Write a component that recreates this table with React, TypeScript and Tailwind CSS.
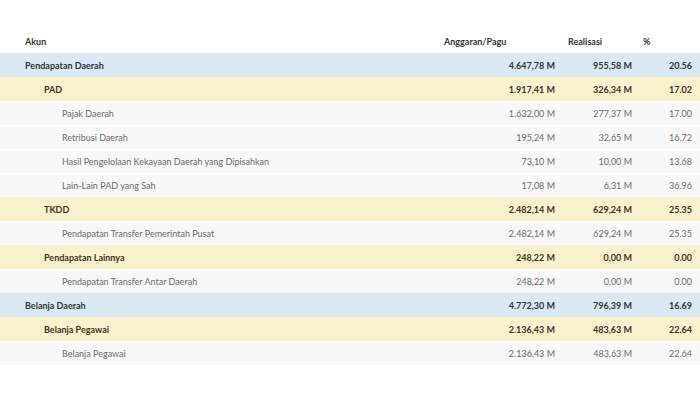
import React from "react";

type Row = { name: string; a: string; r: string; p: string; level: 1 | 2 | 3 };

const rows: Row[] = [
  { name: "Pendapatan Daerah", a: "4.647,78 M", r: "955,58 M", p: "20.56", level: 1 },
  { name: "PAD", a: "1.917,41 M", r: "326,34 M", p: "17.02", level: 2 },
  { name: "Pajak Daerah", a: "1.632,00 M", r: "277,37 M", p: "17.00", level: 3 },
  { name: "Retribusi Daerah", a: "195,24 M", r: "32,65 M", p: "16.72", level: 3 },
  { name: "Hasil Pengelolaan Kekayaan Daerah yang Dipisahkan", a: "73,10 M", r: "10,00 M", p: "13.68", level: 3 },
  { name: "Lain-Lain PAD yang Sah", a: "17,08 M", r: "6,31 M", p: "36.96", level: 3 },
  { name: "TKDD", a: "2.482,14 M", r: "629,24 M", p: "25.35", level: 2 },
  { name: "Pendapatan Transfer Pemerintah Pusat", a: "2.482,14 M", r: "629,24 M", p: "25.35", level: 3 },
  { name: "Pendapatan Lainnya", a: "248,22 M", r: "0,00 M", p: "0.00", level: 2 },
  { name: "Pendapatan Transfer Antar Daerah", a: "248,22 M", r: "0,00 M", p: "0.00", level: 3 },
  { name: "Belanja Daerah", a: "4.772,30 M", r: "796,39 M", p: "16.69", level: 1 },
  { name: "Belanja Pegawai", a: "2.136,43 M", r: "483,63 M", p: "22.64", level: 2 },
  { name: "Belanja Pegawai", a: "2.136,43 M", r: "483,63 M", p: "22.64", level: 3 },
];

function RowView({ row }: { row: Row }) {
  const bg =
    row.level === 1
      ? "bg-[#d9eaf5] text-[#333333] font-bold"
      : row.level === 2
      ? "bg-[#fbf1cc] text-[#3a3528] font-bold"
      : "bg-[#f8f8f9] text-[#6b6b6b] border-t border-white";
  const indent = row.level === 1 ? "pl-[25px]" : row.level === 2 ? "pl-[44px]" : "pl-[62px]";
  return (
    <div className={`grid grid-cols-[434px_131px_77px_58px] h-[24px] items-center ${bg}`}>
      <div className={`${indent} whitespace-nowrap`}>{row.name}</div>
      <div className="text-right pr-[10px]">{row.a}</div>
      <div className="text-right pr-[10px]">{row.r}</div>
      <div className="text-right pr-[8px]">{row.p}</div>
    </div>
  );
}

export default function App() {
  return (
    <div
      className="w-[700px] h-[393px] bg-white text-[9px] leading-none"
      style={{ fontFamily: "Lato, 'Noto Sans', sans-serif" }}
    >
      <div className="pt-[29px]">
        <div className="grid grid-cols-[434px_131px_77px_58px] h-[24px] items-center font-bold text-[#333333]">
          <div className="pl-[25px]">Akun</div>
          <div className="pl-[10px]">Anggaran/Pagu</div>
          <div className="pl-[3px]">Realisasi</div>
          <div className="pl-[1px]">%</div>
        </div>
        {rows.map((r, i) => (
          <RowView key={i} row={r} />
        ))}
      </div>
    </div>
  );
}
